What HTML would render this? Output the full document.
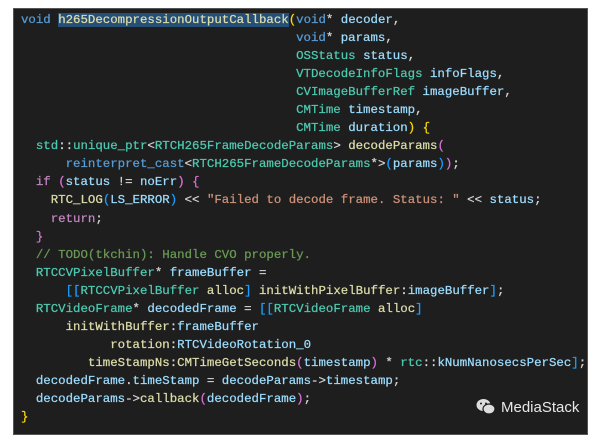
<!DOCTYPE html>
<html><head><style>
body{margin:0;width:600px;height:445px;background:#fff;overflow:hidden;position:relative}
#box{position:absolute;left:13px;top:8px;width:575px;height:427px;background:#1e1e1e;border:1px solid #555;box-sizing:border-box}
pre{position:absolute;left:21px;top:11px;margin:0;font-family:"Liberation Mono",monospace;font-size:12.4px;line-height:18.05px;color:#d4d4d4;letter-spacing:0px;-webkit-text-stroke:0.25px}
.k{color:#569cd6}.t{color:#4ec9b0}.v{color:#9cdcfe}.f{color:#dcdcaa}.s{color:#ce9178}.c{color:#6a9955}.p{color:#c586c0}.y{color:#ffd700}.m{color:#da70d6}.b{color:#179fff}
.sel{background:#264f78}
#wm{position:absolute;left:476px;top:398px;font-family:"Liberation Sans",sans-serif;font-size:15px;color:#e8e8e8}
</style></head><body>
<div id="box"></div>
<pre><span class="k">void</span> <span class="f sel">h265DecompressionOutputCallback</span><span class="y">(</span><span class="k">void</span>* <span class="v">decoder</span>,
                                     <span class="k">void</span>* <span class="v">params</span>,
                                     <span class="t">OSStatus</span> <span class="v">status</span>,
                                     <span class="t">VTDecodeInfoFlags</span> <span class="v">infoFlags</span>,
                                     <span class="t">CVImageBufferRef</span> <span class="v">imageBuffer</span>,
                                     <span class="t">CMTime</span> <span class="v">timestamp</span>,
                                     <span class="t">CMTime</span> <span class="v">duration</span><span class="y">)</span> <span class="y">{</span>
  <span class="t">std</span>::<span class="t">unique_ptr</span>&lt;<span class="t">RTCH265FrameDecodeParams</span>&gt; <span class="f">decodeParams</span><span class="m">(</span>
      <span class="k">reinterpret_cast</span>&lt;<span class="t">RTCH265FrameDecodeParams</span>*&gt;<span class="b">(</span><span class="v">params</span><span class="b">)</span><span class="m">)</span>;
  <span class="p">if</span> <span class="m">(</span><span class="v">status</span> != <span class="v">noErr</span><span class="m">)</span> <span class="m">{</span>
    <span class="f">RTC_LOG</span><span class="b">(</span><span class="v">LS_ERROR</span><span class="b">)</span> &lt;&lt; <span class="s">"Failed to decode frame. Status: "</span> &lt;&lt; <span class="v">status</span>;
    <span class="p">return</span>;
  <span class="m">}</span>
  <span class="c">// TODO(tkchin): Handle CVO properly.</span>
  <span class="t">RTCCVPixelBuffer</span>* <span class="v">frameBuffer</span> =
      <span class="b">[[</span><span class="t">RTCCVPixelBuffer</span> <span class="f">alloc</span><span class="b">]</span> <span class="f">initWithPixelBuffer</span>:<span class="v">imageBuffer</span><span class="b">]</span>;
  <span class="t">RTCVideoFrame</span>* <span class="v">decodedFrame</span> = <span class="b">[[</span><span class="t">RTCVideoFrame</span> <span class="f">alloc</span><span class="b">]</span>
      <span class="f">initWithBuffer</span>:<span class="v">frameBuffer</span>
            <span class="f">rotation</span>:<span class="v">RTCVideoRotation_0</span>
         <span class="f">timeStampNs</span>:<span class="f">CMTimeGetSeconds</span><span class="m">(</span><span class="v">timestamp</span><span class="m">)</span> * <span class="t">rtc</span>::<span class="v">kNumNanosecsPerSec</span><span class="b">]</span>;
  <span class="v">decodedFrame</span>.<span class="v">timeStamp</span> = <span class="v">decodeParams</span>-&gt;<span class="v">timestamp</span>;
  <span class="v">decodeParams</span>-&gt;<span class="f">callback</span><span class="m">(</span><span class="v">decodedFrame</span><span class="m">)</span>;
<span class="y">}</span></pre>
<div id="wm"><svg width="20" height="17" viewBox="0 0 20 17" style="vertical-align:-3px;margin-right:5px"><ellipse cx="7.5" cy="7" rx="7" ry="6" fill="#ddd"/><ellipse cx="13" cy="11" rx="6" ry="5" fill="#ddd" stroke="#1e1e1e" stroke-width="1.2"/><circle cx="5" cy="5.5" r="1" fill="#1e1e1e"/><circle cx="10" cy="5.5" r="1" fill="#1e1e1e"/></svg>MediaStack</div>
</body></html>
